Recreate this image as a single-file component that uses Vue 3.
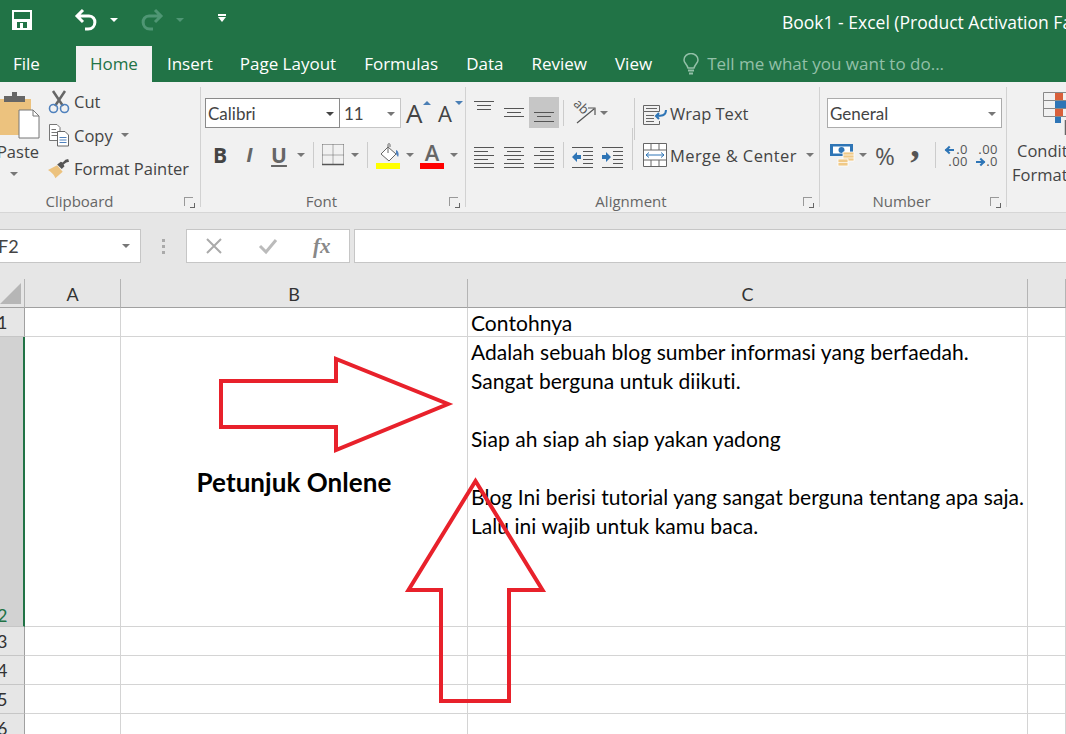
<template>
  <div class="app">
    <header class="titlebar">
      <svg class="save-icon" width="20" height="20" viewBox="0 0 20 20">
        <path d="M1 1H19V19H1Z" fill="none" stroke="#fff" stroke-width="2" />
        <path d="M2 9H18V18H2Z" fill="#fff" />
        <path d="M5 12H15V18H5Z" fill="#217346" />
        <path d="M8 13H11V18H8Z" fill="#fff" />
      </svg>
      <svg class="undo-icon" width="24" height="24" viewBox="0 0 24 24">
        <path d="M9 2L3 8L9 14M3 8H15C23 8 23 21 14 21H11" fill="none" stroke="#fff" stroke-width="3" />
      </svg>
      <span class="qat-caret"></span>
      <svg class="redo-icon" width="24" height="24" viewBox="0 0 24 24">
        <path d="M15 2L21 8L15 14M21 8H9C1 8 1 21 10 21H13" fill="none" stroke="#4f9674" stroke-width="3" />
      </svg>
      <span class="qat-caret dim"></span>
      <span class="qat-custom"></span>
      <span class="doc-title">Book1 - Excel (Product Activation Failed)</span>
    </header>

    <nav class="tabs">
      <span class="tab file">File</span>
      <span class="tab home">Home</span>
      <span class="tab insert">Insert</span>
      <span class="tab layout">Page Layout</span>
      <span class="tab formulas">Formulas</span>
      <span class="tab data">Data</span>
      <span class="tab review">Review</span>
      <span class="tab view">View</span>
      <svg class="bulb" width="16" height="22" viewBox="0 0 16 22">
        <path d="M5 15C4 11 1 10 1 7A7 6.500 0 0 1 15 7C15 10 12 11 11 15Z" fill="none" stroke="#93c0a8" stroke-width="1.500" />
        <path d="M5 17.500H11M6 20.500H10" stroke="#93c0a8" stroke-width="2" />
      </svg>
      <span class="tell">Tell me what you want to do...</span>
    </nav>

    <section class="ribbon">
      <div class="group clipboard">
        <div class="clip-body">
          <div class="paste">
            <svg class="paste-icon" width="42" height="48" viewBox="0 0 42 48">
              <path d="M0 8H31V44H0Z" fill="#ecc27e" />
              <path d="M4 5H12V1H17V5H25V11H4Z" fill="#666" />
              <path d="M19 19H33L39 25V47H19Z" fill="#fff" stroke="#777" />
              <path d="M33 19V25H39" fill="none" stroke="#777" />
            </svg>
            <span class="paste-label">Paste</span>
            <span class="caret paste-caret"></span>
          </div>
          <div class="clip-actions">
            <div class="clip-row">
              <svg width="22" height="24" viewBox="0 0 22 24">
                <path d="M5 1L15 16M17 1L7 16" stroke="#666" stroke-width="2.500" fill="none" />
                <circle cx="5.500" cy="18.500" r="4" fill="none" stroke="#4f81bd" stroke-width="1.600" />
                <circle cx="16.500" cy="18.500" r="4" fill="none" stroke="#4f81bd" stroke-width="1.600" />
              </svg>
              <span>Cut</span>
            </div>
            <div class="clip-row">
              <svg width="22" height="24" viewBox="0 0 22 24">
                <path d="M1.500 1.500H9L12 4.500V17.500H1.500Z" fill="#fff" stroke="#777" />
                <path d="M3.500 6.500H8M3.500 9.500H9M3.500 12.500H9" stroke="#777" />
                <path d="M9.500 8.500H17L20.500 12V23H9.500Z" fill="#fff" stroke="#666" />
                <path d="M11.500 14.500H18.500M11.500 17H18.500M11.500 19.500H18.500" stroke="#4f81bd" />
              </svg>
              <span>Copy</span>
              <span class="caret copy-caret"></span>
            </div>
            <div class="clip-row">
              <svg width="24" height="22" viewBox="0 0 24 22">
                <path d="M0 12L10 7L16 14L8 21C7 17 3 14 0 12Z" fill="#ecc27e" />
                <path d="M10 6L15 11L18 8L17 6L20 4L23 3L22 0L19 1L16 4L14 3Z" fill="#555" />
              </svg>
              <span>Format Painter</span>
            </div>
          </div>
        </div>
        <div class="group-label">Clipboard<span class="launcher"></span></div>
      </div>

      <div class="group font">
        <div class="body">
          <div class="row font-top">
            <div class="select font-name">Calibri<span class="caret dark"></span></div>
            <div class="select font-size">11<span class="caret"></span></div>
            <div class="grow"><b>A</b><i class="tri up"></i></div>
            <div class="grow small"><b>A</b><i class="tri down"></i></div>
          </div>
          <div class="row font-tools">
            <span class="tool-b">B</span>
            <span class="tool-i">I</span>
            <span class="tool-u">U</span>
            <span class="caret"></span>
            <span class="sep"></span>
            <svg width="22" height="22" viewBox="0 0 22 22">
              <path d="M.500.500H21.500M.500 11H21.500M.500.500V21M11 .500V21M21.500.500V21" stroke="#666" stroke-dasharray="1 1" fill="none" />
              <path d="M0 20.500H22" stroke="#555" stroke-width="1.500" />
            </svg>
            <span class="caret"></span>
            <span class="sep"></span>
            <div class="fill-tool">
              <svg width="24" height="20" viewBox="0 0 24 20">
                <path d="M12 4L20 11L13 18L5 11Z" fill="#fff" stroke="#666" />
                <path d="M12 10V2C12 0 14 0 14 2V4" fill="none" stroke="#666" />
                <path d="M20 7C23 8 23 12 22 14L20 11Z" fill="#4f81bd" />
              </svg>
              <span class="bar yellow"></span>
            </div>
            <span class="caret"></span>
            <div class="color-tool">
              <span>A</span>
              <span class="bar red"></span>
            </div>
            <span class="caret"></span>
          </div>
        </div>
        <div class="group-label">Font<span class="launcher"></span></div>
      </div>

      <div class="group alignment">
        <div class="body">
          <div class="row align-top">
            <svg width="22" height="30" viewBox="0 0 22 30"><path d="M1 3.500H21M4 7.500H18M4 11.500H18" stroke="#555" /></svg>
            <svg width="22" height="30" viewBox="0 0 22 30"><path d="M1 10.500H21M4 14.500H18M1 18.500H21" stroke="#555" /></svg>
            <span class="selected">
              <svg width="22" height="30" viewBox="0 0 22 30"><path d="M1 15.500H21M4 19.500H18M1 24.500H21" stroke="#555" /></svg>
            </span>
            <span class="sep"></span>
            <span></span>
            <svg class="orient-icon" width="24" height="26" viewBox="0 0 24 26">
              <text x="7" y="11" transform="rotate(45 7 7)" text-anchor="middle" class="orient">ab</text>
              <path d="M3 23L20 9M14 8H21V15" fill="none" stroke="#555" stroke-width="1.200" />
            </svg>
            <span class="caret"></span>
            <span></span>
            <span class="sep long"></span>
            <span></span>
            <svg width="24" height="24" viewBox="0 0 24 24">
              <path d="M.500 4.500H16.500V10.500H.500ZM.500 10.500V23.500H16.500V20M3 7.500H14M3 14.500H11M3 17.500H11M3 20.500H11" fill="none" stroke="#666" />
              <path d="M23 9C23 15 18 15 13 15M16 12L13 15L16 18" fill="none" stroke="#2e75b6" stroke-width="2" />
            </svg>
            <span class="wide-label">Wrap Text</span>
          </div>
          <div class="row align-bottom">
            <svg width="22" height="30" viewBox="0 0 22 30"><path d="M1 7.500H21M1 11.500H15M1 15.500H21M1 19.500H15M1 23.500H21M1 27.500H21" stroke="#555" /></svg>
            <svg width="22" height="30" viewBox="0 0 22 30"><path d="M1 7.500H21M4 11.500H18M1 15.500H21M4 19.500H18M1 23.500H21M1 27.500H21" stroke="#555" /></svg>
            <svg width="22" height="30" viewBox="0 0 22 30"><path d="M1 7.500H21M7 11.500H21M1 15.500H21M7 19.500H21M1 23.500H21M1 27.500H21" stroke="#555" /></svg>
            <span class="sep"></span>
            <svg width="22" height="30" viewBox="0 0 22 30">
              <path d="M1 7.500H22M12 11.500H22M12 15.500H22M12 19.500H22M1 27.500H22M12 23.500H22" stroke="#555" />
              <path d="M1 17L6 12V15H10V19H6V22Z" fill="#2e75b6" />
            </svg>
            <svg width="22" height="30" viewBox="0 0 22 30">
              <path d="M1 7.500H22M12 11.500H22M12 15.500H22M12 19.500H22M1 27.500H22M12 23.500H22" stroke="#555" />
              <path d="M10 17L5 12V15H1V19H5V22Z" fill="#2e75b6" />
            </svg>
            <span></span>
            <span class="sep long-up"></span>
            <span></span>
            <svg width="24" height="24" viewBox="0 0 24 24">
              <path d="M.500.500H23.500V23.500H.500ZM.500 7H23.500M.500 17H23.500M8 .500V7M16 .500V7M8 17V23.500M16 17V23.500" fill="#fff" stroke="#666" />
              <path d="M3 12H21M6 9.500L3 12L6 14.500M18 9.500L21 12L18 14.500" fill="none" stroke="#2e75b6" />
            </svg>
            <span class="wide-label merge-label">Merge &amp; Center</span>
            <span class="caret merge-caret"></span>
          </div>
        </div>
        <div class="group-label">Alignment<span class="launcher"></span></div>
      </div>

      <div class="group number">
        <div class="body">
          <div class="row">
            <div class="select format">General<span class="caret"></span></div>
          </div>
          <div class="row number-tools">
            <svg width="26" height="24" viewBox="0 0 26 24">
              <path d="M1 1H24V13H1Z" fill="#2e75b6" />
              <path d="M4 3.500H21V10.500H4Z" fill="#fff" />
              <circle cx="12.500" cy="7" r="3" fill="#2e75b6" />
              <path d="M14 9H25V18H14Z" fill="#f0c987" stroke="#fff" stroke-width=".8" />
              <path d="M9 16H19V23H9Z" fill="#f0c987" stroke="#fff" stroke-width=".8" />
              <path d="M14 12H25M14 15H25M9 19.500H19" stroke="#fff" stroke-width=".7" />
            </svg>
            <span class="caret"></span>
            <span class="percent">%</span>
            <span class="comma">,</span>
            <span class="sep"></span>
            <div class="dec-tool">
              <span><i class="arrow-left"></i>.0</span>
              <span>.00</span>
            </div>
            <div class="dec-tool">
              <span>.00</span>
              <span><i class="arrow-right"></i>.0</span>
            </div>
          </div>
        </div>
        <div class="group-label">Number<span class="launcher"></span></div>
      </div>

      <div class="group cond">
        <svg class="cond-icon" width="30" height="44" viewBox="0 0 30 44">
          <path d="M.500.500H30M.500 8.500H30M.500 16.500H30M.500 24.500H30M.500.500V24.500" stroke="#888" fill="none" />
          <path d="M12 1H20V8H12ZM12 17H20V24H12Z" fill="#d9603b" />
          <path d="M12 9H30V16H12ZM12 25H18V31H12Z" fill="#2e75b6" />
          <path d="M22.500 28V43" stroke="#666" stroke-width="1.500" />
        </svg>
        <span class="cond-line first">Conditional</span>
        <span class="cond-line">Formatting</span>
      </div>
    </section>

    <section class="formula-bar">
      <div class="name-box">F2<span class="caret"></span></div>
      <div class="dots"><i></i><i></i><i></i></div>
      <div class="fx-box">
        <svg width="18" height="18" viewBox="0 0 18 18"><path d="M2 2L16 16M16 2L2 16" stroke="#aaa" stroke-width="2" /></svg>
        <svg width="20" height="18" viewBox="0 0 20 18"><path d="M2 9L8 15L18 3" fill="none" stroke="#bbb" stroke-width="3" /></svg>
        <span class="fx">fx</span>
      </div>
      <div class="formula-input"></div>
    </section>

    <main class="sheet">
      <div class="head corner"><i class="corner-tri"></i></div>
      <div v-for="col in cols" :key="col" class="head col-head">{{ col }}</div>
      <template v-for="row in rows" :key="row.n">
        <div class="head row-head" :class="{ active: row.n === 2 }"><span>{{ row.n }}</span></div>
        <div class="cell"></div>
        <div class="cell b-cell">{{ row.b }}</div>
        <div class="cell c-cell">{{ row.c }}</div>
        <div class="cell"></div>
      </template>

      <svg class="marks" width="1066" height="455" viewBox="0 279 1066 455">
        <path d="M221 381H336V359L448 404L336 450V427H221Z" />
        <path d="M475.500 481L542.500 590H509V701H441V590H408.500Z" />
      </svg>
    </main>
  </div>
</template>

<script setup>
const cols = ['A', 'B', 'C', '']

const rows = [
  { n: 1, b: '', c: 'Contohnya' },
  {
    n: 2,
    b: 'Petunjuk Onlene',
    c: 'Adalah sebuah blog sumber informasi yang berfaedah.\nSangat berguna untuk diikuti.\n\nSiap ah siap ah siap yakan yadong\n\nBlog Ini berisi tutorial yang sangat berguna tentang apa saja.\nLalu ini wajib untuk kamu baca.'
  },
  { n: 3, b: '', c: '' },
  { n: 4, b: '', c: '' },
  { n: 5, b: '', c: '' },
  { n: 6, b: '', c: '' }
]
</script>

<style scoped>
.app {
  position: relative;
  width: 1066px;
  height: 734px;
  overflow: hidden;
  background: #fff;
  font-family: "Open Sans", "Liberation Sans", sans-serif;
  color: #444;
}

/* title bar */
.titlebar {
  height: 45px;
  background: #217346;
  display: flex;
  align-items: center;
  white-space: nowrap;
}
.titlebar > * {
  flex: none;
}
.save-icon {
  margin-left: 12px;
  margin-top: -6px;
}
.undo-icon {
  margin-left: 42px;
  margin-top: -5px;
}
.redo-icon {
  margin-left: 22px;
  margin-top: -5px;
}
.qat-caret {
  width: 0;
  height: 0;
  margin: -5px 0 0 12px;
  border: 4px solid transparent;
  border-top: 4px solid #fff;
  border-bottom: 0;
}
.qat-caret.dim {
  border-top-color: #4f9674;
  margin-left: 12px;
}
.qat-custom {
  width: 0;
  height: 0;
  margin: -6px 0 0 34px;
  border: 4px solid transparent;
  border-top: 5px solid #fff;
  border-bottom: 0;
  position: relative;
}
.qat-custom::before {
  content: "";
  position: absolute;
  left: -4px;
  top: -8px;
  width: 8px;
  height: 1.500px;
  background: #fff;
}
.doc-title {
  margin-left: 556px;
  margin-top: -2px;
  font-size: 17.500px;
  color: #fff;
}

/* tabs */
.tabs {
  height: 37px;
  background: #217346;
  display: flex;
  align-items: center;
  white-space: nowrap;
  color: #fff;
  font-size: 17px;
}
.tabs > * {
  flex: none;
}
.tab {
  line-height: 37px;
}
.file { margin-left: 13px; }
.home {
  margin-left: 36px;
  width: 76px;
  align-self: flex-end;
  line-height: 36px;
  text-align: center;
  background: #f1f1f1;
  color: #217346;
}
.insert { margin-left: 15px; }
.layout { margin-left: 27px; }
.formulas { margin-left: 28px; }
.data { margin-left: 28px; }
.review { margin-left: 28px; }
.view { margin-left: 28px; }
.bulb {
  margin-left: 31px;
}
.tell {
  margin-left: 8px;
  color: #93c0a8;
}

/* ribbon */
.ribbon {
  height: 131px;
  box-sizing: border-box;
  background: #f1f1f1;
  border-bottom: 1px solid #d6d6d6;
  display: flex;
  white-space: nowrap;
  font-size: 16.500px;
  overflow: hidden;
}
.group {
  position: relative;
  display: flex;
  flex-direction: column;
  flex: none;
  box-sizing: border-box;
}
.group::after {
  content: "";
  position: absolute;
  right: 0;
  top: 5px;
  bottom: 5px;
  width: 1px;
  background: #d2d2d2;
}
.clipboard { width: 201px; }
.font { width: 265px; }
.alignment { width: 354px; }
.number { width: 187px; }
.cond {
  flex: 1;
  overflow: hidden;
}
.cond::after { display: none; }
.body {
  flex: 1;
  min-height: 0;
  padding-top: 16px;
  display: flex;
  flex-direction: column;
  gap: 12px;
}
.group-label {
  position: relative;
  flex: none;
  height: 22px;
  line-height: 22px;
  text-align: center;
  font-size: 15px;
  color: #666;
  padding-right: 24px;
}
.clipboard .group-label {
  padding-right: 42px;
}
.launcher {
  position: absolute;
  right: 8px;
  top: 7px;
  width: 8px;
  height: 8px;
  border: 1px solid #999;
  border-right: 0;
  border-bottom: 0;
}
.launcher::after {
  content: "";
  position: absolute;
  right: -2px;
  bottom: -2px;
  width: 4px;
  height: 4px;
  border-right: 1.500px solid #666;
  border-bottom: 1.500px solid #666;
}
.row {
  height: 30px;
  display: flex;
  align-items: center;
  flex: none;
}
.caret {
  display: inline-block;
  width: 0;
  height: 0;
  border: 4px solid transparent;
  border-top: 4px solid #777;
  border-bottom: 0;
}
.caret.dark { border-top-color: #444; }
.sep {
  display: block;
  width: 1px;
  height: 26px;
  background: #ccc;
}

/* clipboard */
.clip-body {
  flex: 1;
  min-height: 0;
  display: flex;
}
.paste {
  width: 48px;
  flex: none;
  display: flex;
  flex-direction: column;
  align-items: center;
  position: relative;
}
.paste-icon {
  margin-top: 9px;
  margin-left: -6px;
  flex: none;
}
.paste-label {
  margin-top: 2px;
  margin-left: -12px;
  line-height: 22px;
}
.paste-caret {
  margin-top: 9px;
  margin-left: -20px;
}
.clip-actions {
  padding-top: 3px;
  display: flex;
  flex-direction: column;
}
.clip-row {
  height: 33.500px;
  display: flex;
  align-items: center;
  gap: 4px;
}
.clip-row svg {
  width: 22px;
  flex: none;
}
.copy-caret {
  margin-left: 4px;
}

/* font */
.font-top {
  padding-left: 4px;
  font-family: Lato, "Liberation Sans", sans-serif;
  font-size: 17px;
}
.select {
  position: relative;
  box-sizing: border-box;
  height: 30px;
  background: #fff;
  border: 1px solid #ababab;
  padding-left: 2px;
  padding-top: 1px;
  line-height: 28px;
  display: flex;
  align-items: center;
  justify-content: space-between;
  padding-right: 5px;
}
.font-name {
  width: 135px;
  border-color: #8a8a8a;
}
.font-size {
  width: 61px;
  border-left: 0;
  border-color: #c6c6c6;
  padding-left: 4px;
}
.grow {
  position: relative;
  width: 25px;
  margin-left: 5px;
  font-size: 26px;
  font-family: "Open Sans", sans-serif;
  line-height: 30px;
}
.grow b {
  font-weight: 400;
}
.grow.small {
  margin-left: 7px;
  width: 22px;
  font-size: 22px;
}
.tri {
  position: absolute;
  top: 3px;
  right: 0;
  width: 0;
  height: 0;
  border: 4px solid transparent;
}
.tri.up {
  border-bottom: 4px solid #4a7fb5;
  border-top: 0;
}
.tri.down {
  right: -3px;
  border-top: 4px solid #4a7fb5;
  border-bottom: 0;
}
.font-tools {
  display: grid;
  margin-left: 4px;
  grid-template-columns: 30px 29px 30px 14px 10px 30px 14px 10px 32px 11px 34px 9px;
  grid-template-rows: 30px;
  place-items: center;
  font-size: 21px;
}
.tool-b {
  font-weight: 700;
}
.tool-i {
  font-family: "Liberation Sans", sans-serif;
  font-style: italic;
  font-weight: 700;
  color: #666;
}
.tool-u {
  font-weight: 700;
  color: #666;
  text-decoration: underline;
}
.fill-tool,
.color-tool {
  display: flex;
  flex-direction: column;
  align-items: center;
  height: 28px;
  justify-content: flex-end;
}
.color-tool span:first-child {
  font-size: 22px;
  line-height: 22px;
  font-weight: 600;
  color: #666;
}
.bar {
  display: block;
  width: 24px;
  height: 6px;
  flex: none;
}
.yellow { background: #ffff00; }
.red { background: #ff0000; }

/* alignment */
.align-top,
.align-bottom {
  display: grid;
  margin-left: 3px;
  place-items: center;
  justify-content: start;
  grid-template-rows: 30px;
}
.align-top {
  grid-template-columns: 30px 30px 30px 8px 8px 22px 14px 20px 6px 6px 24px auto;
}
.align-bottom {
  grid-template-columns: 30px 30px 30px 8px 30px 30px 2px 6px 8px 24px auto 26px;
}
.selected {
  width: 30px;
  height: 31px;
  background: #c6c6c6;
  display: flex;
  justify-content: center;
  margin-top: -1px;
}
.orient-icon {
  overflow: visible;
}
.orient {
  font-size: 13px;
  fill: #555;
  font-family: "Open Sans", sans-serif;
}
.long {
  height: 42px;
  align-self: start;
}
.long-up {
  height: 42px;
  align-self: end;
}
.wide-label {
  margin-left: 3px;
}
.merge-label {
  letter-spacing: .4px;
}

/* number */
.format {
  width: 175px;
  margin-left: 7px;
  font-family: Lato, "Liberation Sans", sans-serif;
  font-size: 17px;
  color: #444;
}
.number-tools {
  display: grid;
  margin-left: 9px;
  grid-template-columns: 26px 15px 30px 30px 10px 28px 30px;
  grid-template-rows: 30px;
  place-items: center;
}
.percent {
  font-size: 24px;
  color: #555;
}
.comma {
  font-family: "Liberation Serif", serif;
  font-size: 38px;
  line-height: 22px;
  font-weight: 700;
  color: #555;
  margin-top: -22px;
}
.dec-tool {
  justify-self: end;
  display: flex;
  flex-direction: column;
  align-items: flex-end;
  font-size: 13px;
  line-height: 12px;
  letter-spacing: .5px;
  color: #555;
}
.arrow-left,
.arrow-right {
  display: inline-block;
  width: 8px;
  height: 2px;
  margin-right: 2px;
  vertical-align: 3px;
  background: #2e75b6;
  position: relative;
}
.arrow-left::before,
.arrow-right::before {
  content: "";
  position: absolute;
  top: -3px;
  width: 6px;
  height: 6px;
  border-left: 2px solid #2e75b6;
  border-bottom: 2px solid #2e75b6;
  box-sizing: border-box;
  transform: translateY(1px) rotate(45deg);
}
.arrow-left::before { left: 0; }
.arrow-right::before {
  right: 0;
  transform: translateY(1px) rotate(225deg);
}

/* conditional formatting */
.cond-icon {
  margin: 10px 0 0 36px;
  flex: none;
}
.cond-line {
  position: relative;
  line-height: 24px;
  padding-left: 5px;
}
.cond-line.first {
  margin-top: 3px;
  padding-left: 10px;
}

/* formula bar */
.formula-bar {
  height: 66px;
  box-sizing: border-box;
  padding-top: 16px;
  background: #e6e6e6;
  display: flex;
  align-items: flex-start;
}
.name-box,
.fx-box,
.formula-input {
  box-sizing: border-box;
  height: 34px;
  background: #fff;
  border: 1px solid #c6c6c6;
}
.name-box {
  width: 141px;
  border-left: 0;
  display: flex;
  align-items: center;
  justify-content: space-between;
  padding-right: 10px;
  font-family: Lato, "Liberation Sans", sans-serif;
  font-size: 18px;
  text-indent: -2px;
}
.dots {
  width: 45px;
  height: 34px;
  display: flex;
  flex-direction: column;
  align-items: center;
  justify-content: center;
  gap: 3px;
}
.dots i {
  width: 3px;
  height: 3px;
  background: #aaa;
}
.fx-box {
  width: 164px;
  display: flex;
  align-items: center;
  padding-left: 18px;
  gap: 35px;
}
.fx {
  font-family: "Liberation Serif", serif;
  font-style: italic;
  font-weight: 700;
  font-size: 21px;
  color: #888;
}
.formula-input {
  margin-left: 4px;
  flex: 1;
  border-right: 0;
}

/* sheet */
.sheet {
  position: relative;
  display: grid;
  grid-template-columns: 25px 96px 347px 560px 1fr;
  grid-template-rows: 29px 29px 290px 29px 29px 29px 29px;
  font-family: Lato, "Liberation Sans", sans-serif;
  font-size: 21px;
  letter-spacing: .05px;
  color: #000;
  background: #fff;
}
.head {
  background: #e6e6e6;
  box-sizing: border-box;
}
.corner,
.col-head {
  border-right: 1px solid #b4b4b4;
  border-bottom: 1px solid #a0a0a0;
}
.corner {
  position: relative;
}
.corner-tri {
  position: absolute;
  left: 0;
  top: 4px;
  width: 0;
  height: 0;
  border-style: solid;
  border-width: 0 0 21px 21px;
  border-color: transparent transparent #b6b6b6 transparent;
}
.col-head {
  text-align: center;
  line-height: 30px;
  font-size: 18px;
  color: #333;
}
.row-head {
  border-right: 1px solid #a0a0a0;
  border-bottom: 1px solid #c6c6c6;
  display: flex;
  align-items: center;
  font-size: 18px;
  color: #333;
}
.row-head span {
  margin-left: -3px;
}
.row-head.active {
  background: #d2d2d2;
  border-right: 2px solid #217346;
  color: #217346;
  align-items: flex-end;
}
.cell {
  box-sizing: border-box;
  border-right: 1px solid #d4d4d4;
  border-bottom: 1px solid #d4d4d4;
}
.b-cell {
  display: flex;
  align-items: center;
  justify-content: center;
  font-weight: 700;
  font-size: 26px;
}
.c-cell {
  padding: 0 0 0 3px;
  white-space: pre-line;
  line-height: 29px;
}
.marks {
  position: absolute;
  left: 0;
  top: 0;
  pointer-events: none;
}
.marks path {
  fill: none;
  stroke: #e8212b;
  stroke-width: 4;
  stroke-linejoin: miter;
}
</style>
